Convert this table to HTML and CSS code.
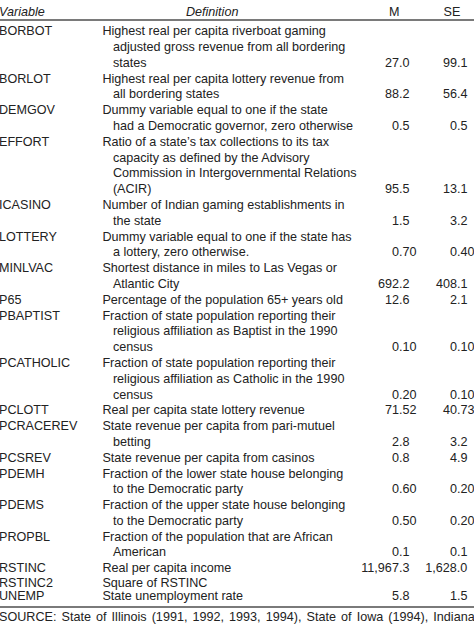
FILE: index.html
```html
<!DOCTYPE html>
<html lang="en">
<head>
<meta charset="utf-8">
<title>Variable definitions</title>
<link rel="stylesheet" href="styles.css">
</head>
<body>
<div class="table">
  <div class="row head">
    <div class="var">Variable</div>
    <div class="def">Definition</div>
    <div class="m">M</div>
    <div class="se">SE</div>
  </div>
  <div class="body">
    <div class="row"><div class="var">BORBOT</div><div class="def">Highest real per capita riverboat gaming<br>adjusted gross revenue from all bordering<br>states</div><div class="m d1">27.0</div><div class="se d1">99.1</div></div>
    <div class="row"><div class="var">BORLOT</div><div class="def">Highest real per capita lottery revenue from<br>all bordering states</div><div class="m d1">88.2</div><div class="se d1">56.4</div></div>
    <div class="row"><div class="var">DEMGOV</div><div class="def">Dummy variable equal to one if the state<br>had a Democratic governor, zero otherwise</div><div class="m d1">0.5</div><div class="se d1">0.5</div></div>
    <div class="row"><div class="var">EFFORT</div><div class="def">Ratio of a state’s tax collections to its tax<br>capacity as defined by the Advisory<br>Commission in Intergovernmental Relations<br>(ACIR)</div><div class="m d1">95.5</div><div class="se d1">13.1</div></div>
    <div class="row"><div class="var">ICASINO</div><div class="def">Number of Indian gaming establishments in<br>the state</div><div class="m d1">1.5</div><div class="se d1">3.2</div></div>
    <div class="row"><div class="var">LOTTERY</div><div class="def">Dummy variable equal to one if the state has<br>a lottery, zero otherwise.</div><div class="m">0.70</div><div class="se">0.40</div></div>
    <div class="row"><div class="var">MINLVAC</div><div class="def">Shortest distance in miles to Las Vegas or<br>Atlantic City</div><div class="m d1">692.2</div><div class="se d1">408.1</div></div>
    <div class="row"><div class="var">P65</div><div class="def">Percentage of the population 65+ years old</div><div class="m d1">12.6</div><div class="se d1">2.1</div></div>
    <div class="row"><div class="var">PBAPTIST</div><div class="def">Fraction of state population reporting their<br>religious affiliation as Baptist in the 1990<br>census</div><div class="m">0.10</div><div class="se">0.10</div></div>
    <div class="row"><div class="var">PCATHOLIC</div><div class="def">Fraction of state population reporting their<br>religious affiliation as Catholic in the 1990<br>census</div><div class="m">0.20</div><div class="se">0.10</div></div>
    <div class="row"><div class="var">PCLOTT</div><div class="def">Real per capita state lottery revenue</div><div class="m">71.52</div><div class="se">40.73</div></div>
    <div class="row"><div class="var">PCRACEREV</div><div class="def">State revenue per capita from pari-mutuel<br>betting</div><div class="m d1">2.8</div><div class="se d1">3.2</div></div>
    <div class="row"><div class="var">PCSREV</div><div class="def">State revenue per capita from casinos</div><div class="m d1">0.8</div><div class="se d1">4.9</div></div>
    <div class="row"><div class="var">PDEMH</div><div class="def">Fraction of the lower state house belonging<br>to the Democratic party</div><div class="m">0.60</div><div class="se">0.20</div></div>
    <div class="row"><div class="var">PDEMS</div><div class="def">Fraction of the upper state house belonging<br>to the Democratic party</div><div class="m">0.50</div><div class="se">0.20</div></div>
    <div class="row"><div class="var">PROPBL</div><div class="def">Fraction of the population that are African<br>American</div><div class="m d1">0.1</div><div class="se d1">0.1</div></div>
    <div class="row"><div class="var">RSTINC</div><div class="def">Real per capita income</div><div class="m d1">11,967.3</div><div class="se d1">1,628.0</div></div>
    <div class="row tight"><div class="var">RSTINC2</div><div class="def">Square of RSTINC</div><div class="m"></div><div class="se"></div></div>
    <div class="row tight"><div class="var">UNEMP</div><div class="def">State unemployment rate</div><div class="m d1">5.8</div><div class="se d1">1.5</div></div>
  </div>
  <p class="source">SOURCE: State of Illinois (1991, 1992, 1993, 1994), State of Iowa (1994), Indiana</p>
</div>
</body>
</html>
```

FILE: styles.css
```css
html, body {
  margin: 0;
  padding: 0;
  background: #ffffff;
}

body {
  width: 474px;
  height: 631px;
  overflow: hidden;
  font-family: "Liberation Sans", Arial, sans-serif;
  font-size: 12.6px;
  color: #222222;
}

.table {
  margin-left: -1px;
  width: 476px;
}

.row {
  display: grid;
  grid-template-columns: 103.4px 257px 57px 58px;
  line-height: 15.8px;
}

.row.tight {
  line-height: 13px;
}

.head {
  padding-top: 6px;
  line-height: 12.5px;
  border-bottom: 2px solid #7a7a7a;
}

.head .var,
.head .def {
  font-style: italic;
}

.head .def {
  padding-left: 94px;
}

.head .m {
  padding-right: 17px;
}

.head .se {
  padding-right: 14px;
}

.body {
  padding-top: 3.7px;
  padding-bottom: 2.6px;
  border-bottom: 2px solid #7a7a7a;
}

.var {
  white-space: nowrap;
}

.def {
  white-space: nowrap;
  padding-left: 10.5px;
  text-indent: -10.5px;
}

.m,
.se {
  text-align: right;
  white-space: nowrap;
  align-self: end;
}

.d1 {
  padding-right: 7px;
}

.source {
  margin: 0;
  padding-top: 2.4px;
  line-height: 15.8px;
  white-space: nowrap;
  word-spacing: 1.6px;
}
```
